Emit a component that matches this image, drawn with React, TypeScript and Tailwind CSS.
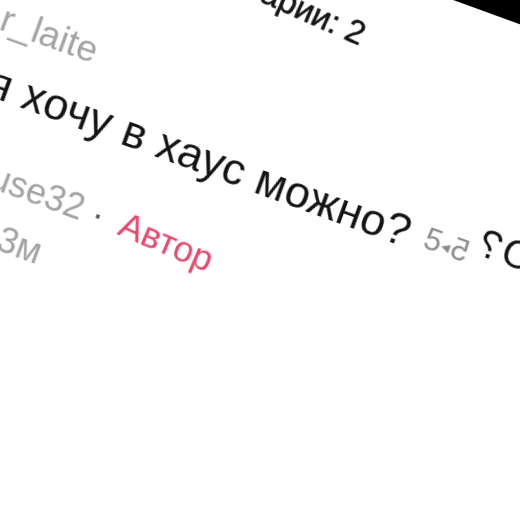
import React from "react";

export default function App() {
  return (
    <div className="relative w-[520px] h-[520px] overflow-hidden bg-white" style={{ fontFamily: '"Liberation Sans", Arial, sans-serif' }}>
      <div className="absolute left-0 top-0 w-[760px] h-[760px] origin-top-left [transform:rotate(20deg)_translate(-20px,-200px)] blur-[0.5px]">
        <div className="h-[45px] bg-black" />
        <div className="flex flex-col bg-white h-[715px]">
          <div className="mt-[47px] w-[373px] text-right text-[33px] leading-none font-normal text-[#141414] [-webkit-text-stroke:0.6px_#141414] origin-bottom-right rotate-4">
            Комментарии: 2
          </div>
          <div className="mt-[72px] ml-[28px] text-[37px] leading-none text-[#a3a3a3]">r_laite</div>
          <div className="mt-[22px] ml-[37px] flex items-baseline leading-none whitespace-nowrap">
            <span className="text-[45px] tracking-[0.3px] text-[#141414]">я хочу в хаус можно?</span>
            <span className="relative -top-[6px] ml-[16px] text-[31px] text-[#8c8c8c] flex items-baseline">
              <span>5</span>
              <span className="relative -top-[3px] text-[17px] mx-[1px]">◂</span>
              <span className="inline-block -scale-x-100">5</span>
            </span>
            <span className="relative -top-[18px] ml-[8px] inline-block -scale-x-100 text-[40px] text-[#141414]">?</span>
            <span className="relative -top-[18px] ml-[2px] text-[40px] text-[#141414]">O</span>
          </div>
          <div className="mt-[49px] ml-[72px] flex items-baseline text-[36px] leading-none whitespace-nowrap">
            <span className="text-[#a3a3a3]">use32</span>
            <span className="ml-[10px] text-[#555]">·</span>
            <span className="ml-[18px] inline-block origin-left rotate-3 text-[#e9476c]">Автор</span>
          </div>
          <div className="mt-[20px] ml-[100px] text-[36px] leading-none text-[#a3a3a3]">3м</div>
        </div>
      </div>
    </div>
  );
}
